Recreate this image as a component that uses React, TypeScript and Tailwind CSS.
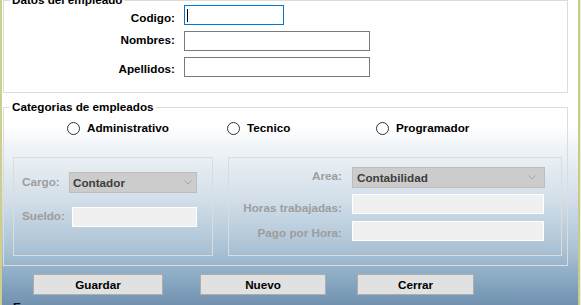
import type { ReactNode } from "react";

function Caption({ children }: { children: ReactNode }) {
  return (
    <span className="absolute left-[6px] top-[-8px] bg-white px-[2px] leading-[14px] text-black">
      {children}
    </span>
  );
}

function Chevron() {
  return (
    <svg width="8" height="5" viewBox="0 0 8 5" fill="none" aria-hidden>
      <polyline points="0.5,0.5 4,4 7.5,0.5" stroke="#a8a8a8" strokeWidth="1" />
    </svg>
  );
}

function Combo({ value, width, padRight }: { value: string; width: string; padRight: string }) {
  return (
    <div
      className={`flex h-[21px] items-center justify-between border border-[#bdbdbd] bg-[#cccccc] text-[#3d3d3d] ${width} ${padRight}`}
    >
      <span>{value}</span>
      <Chevron />
    </div>
  );
}

function Radio({ label, width }: { label: string; width: string }) {
  return (
    <label className={`flex items-center gap-[7px] ${width}`}>
      <span className="h-[13px] w-[13px] shrink-0 rounded-full border border-[#333333] bg-white" />
      {label}
    </label>
  );
}

const disabledLabel = "text-[#9d9d9d]";
const disabledBox = "h-[20px] border border-white bg-[#f0f0f0]";

export default function App() {
  return (
    <div className="flex h-[305px] w-[581px] overflow-hidden bg-white font-['Liberation_Sans',Arial,sans-serif] text-[11.7px] font-bold leading-[14px] text-black">
      <div className="w-[2px] shrink-0 bg-[#cdcf8e]" />

      <div className="flex w-[576px] shrink-0 flex-col bg-[linear-gradient(to_bottom,#ffffff_0px,#ffffff_126px,#eef3f7_150px,#d2dee8_200px,#aac2d5_250px,#7e9fbb_290px,#7191ae_305px)]">
        {/* Datos del empleado */}
        <section className="relative ml-[1px] h-[93px] w-[565px] shrink-0 border border-[#dcdcdc] pt-[4px]">
          <Caption>Datos del empleado</Caption>
          <div className="flex flex-col gap-[6px]">
            <div className="flex h-[20px]">
              <span className="mt-[6px] w-[171px] text-right">Codigo:</span>
              <div className="ml-[9px] flex h-[20px] w-[100px] items-center border border-[#0078d7] bg-white pl-[2px]">
                <span className="h-[13px] w-px bg-black" />
              </div>
            </div>
            <div className="flex h-[20px]">
              <span className="mt-[2px] w-[171px] text-right">Nombres:</span>
              <input className="ml-[9px] h-[20px] w-[186px] border border-[#7a7a7a] bg-white" />
            </div>
            <div className="flex h-[20px]">
              <span className="mt-[5px] w-[171px] text-right">Apellidos:</span>
              <input className="ml-[9px] h-[20px] w-[186px] border border-[#7a7a7a] bg-white" />
            </div>
          </div>
        </section>

        {/* Categorias de empleados */}
        <section className="relative ml-[1px] mt-[14px] h-[159px] w-[565px] shrink-0 border border-[#dcdcdc] pt-[13px]">
          <Caption>Categorias de empleados</Caption>
          <div className="flex h-[14px] pl-[63px]">
            <Radio label="Administrativo" width="w-[160px]" />
            <Radio label="Tecnico" width="w-[149px]" />
            <Radio label="Programador" width="" />
          </div>

          <div className="mt-[22px] flex pl-[9px]">
            <div className="h-[99px] w-[200px] border border-[#dcdcdc] pl-[8px] pt-[14px]">
              <div className="flex h-[21px]">
                <span className={`mt-[3px] w-[47px] ${disabledLabel}`}>Cargo:</span>
                <Combo value="Contador" width="w-[128px]" padRight="pl-[3px] pr-[4px]" />
              </div>
              <div className="mt-[14px] flex h-[20px]">
                <span className={`mt-[2px] w-[50px] ${disabledLabel}`}>Sueldo:</span>
                <input disabled className={`w-[125px] ${disabledBox}`} />
              </div>
            </div>

            <div className="ml-[15px] h-[99px] w-[334px] border border-[#dcdcdc] pt-[9px]">
              <div className="flex h-[21px]">
                <span className={`mt-[2px] w-[113px] text-right ${disabledLabel}`}>Area:</span>
                <div className="ml-[10px]">
                  <Combo value="Contabilidad" width="w-[193px]" padRight="pl-[4px] pr-[8px]" />
                </div>
              </div>
              <div className="mt-[6px] flex h-[20px]">
                <span className={`mt-[7px] w-[113px] text-right ${disabledLabel}`}>Horas trabajadas:</span>
                <input disabled className={`ml-[10px] w-[192px] ${disabledBox}`} />
              </div>
              <div className="mt-[7px] flex h-[20px]">
                <span className={`mt-[5px] w-[113px] text-right ${disabledLabel}`}>Pago por Hora:</span>
                <input disabled className={`ml-[10px] w-[192px] ${disabledBox}`} />
              </div>
            </div>
          </div>
        </section>

        {/* Botones */}
        <div className="mt-[8px] flex shrink-0 pl-[31px]">
          <button type="button" className="h-[21px] w-[130px] border border-[#adadad] bg-[#e1e1e1]">
            Guardar
          </button>
          <button type="button" className="ml-[37px] h-[21px] w-[126px] border border-[#adadad] bg-[#e1e1e1]">
            Nuevo
          </button>
          <button type="button" className="ml-[31px] h-[21px] w-[117px] border border-[#adadad] bg-[#e1e1e1]">
            Cerrar
          </button>
        </div>

        <span className="ml-[11px] mt-[5px] shrink-0">E</span>
      </div>

      <div className="w-[2px] shrink-0 bg-[#c9cc86]" />
      <div className="w-px shrink-0 bg-[#eeeeee]" />
    </div>
  );
}
